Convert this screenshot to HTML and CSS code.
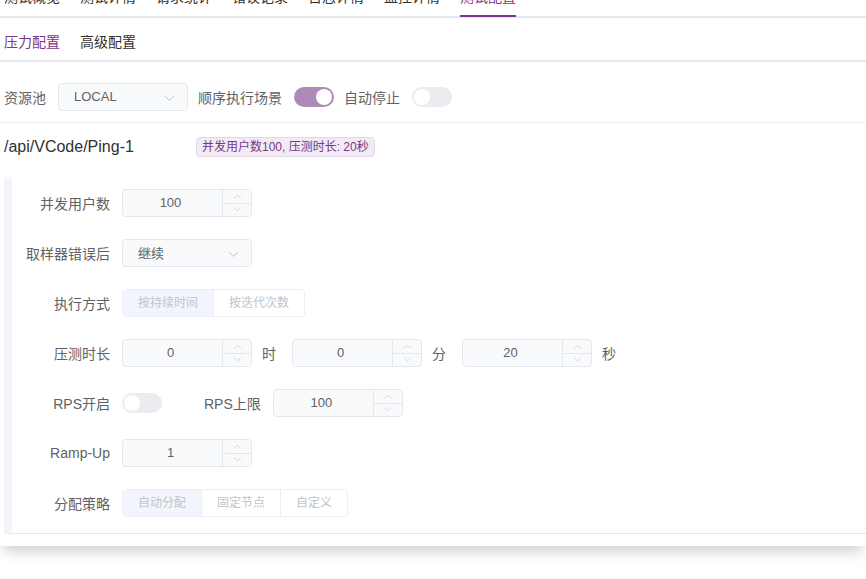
FILE: index.html
```html
<!DOCTYPE html>
<html lang="zh-CN">
<head>
    <meta charset="UTF-8">
    <meta name="viewport" content="width=device-width, initial-scale=1.0">
    <title>测试配置</title>
    <link rel="stylesheet" href="styles.css">
</head>
<body>
    <div class="card">
        <nav class="tabs">
            <a>测试概览</a>
            <a>测试详情</a>
            <a>请求统计</a>
            <a>错误记录</a>
            <a>日志详情</a>
            <a>监控详情</a>
            <a class="active">测试配置</a>
        </nav>

        <nav class="sub-tabs">
            <a class="active">压力配置</a>
            <a>高级配置</a>
        </nav>

        <div class="pool-row">
            <span>资源池</span>
            <div class="select pool-select">
                <span>LOCAL</span>
                <svg class="chev" width="11" height="7" viewBox="0 0 11 7"><path d="M1 1l4.5 4.5L10 1" fill="none" stroke="#c0c4cc" stroke-width="1"/></svg>
            </div>
            <span>顺序执行场景</span>
            <span class="switch on"></span>
            <span>自动停止</span>
            <span class="switch"></span>
        </div>

        <div class="api-row">
            <span class="api-name">/api/VCode/Ping-1</span>
            <span class="tag">并发用户数100, 压测时长: 20秒</span>
        </div>

        <section class="form">
            <div class="form-row">
                <label>并发用户数</label>
                <div class="num">
                    <span class="num-val">100</span>
                    <span class="num-ctrl">
                        <span><svg width="9" height="5" viewBox="0 0 9 5"><path d="M1 4.5L4.5 1L8 4.5" fill="none" stroke="#d4d7de"/></svg></span>
                        <span><svg width="9" height="5" viewBox="0 0 9 5"><path d="M1 .5L4.5 4L8 .5" fill="none" stroke="#d4d7de"/></svg></span>
                    </span>
                </div>
            </div>

            <div class="form-row">
                <label>取样器错误后</label>
                <div class="select">
                    <span>继续</span>
                    <svg class="chev" width="11" height="7" viewBox="0 0 11 7"><path d="M1 1l4.5 4.5L10 1" fill="none" stroke="#c0c4cc" stroke-width="1"/></svg>
                </div>
            </div>

            <div class="form-row">
                <label>执行方式</label>
                <div class="btn-group">
                    <span class="checked">按持续时间</span>
                    <span>按迭代次数</span>
                </div>
            </div>

            <div class="form-row">
                <label>压测时长</label>
                <div class="num">
                    <span class="num-val">0</span>
                    <span class="num-ctrl">
                        <span><svg width="9" height="5" viewBox="0 0 9 5"><path d="M1 4.5L4.5 1L8 4.5" fill="none" stroke="#d4d7de"/></svg></span>
                        <span><svg width="9" height="5" viewBox="0 0 9 5"><path d="M1 .5L4.5 4L8 .5" fill="none" stroke="#d4d7de"/></svg></span>
                    </span>
                </div>
                <span class="unit">时</span>
                <div class="num">
                    <span class="num-val">0</span>
                    <span class="num-ctrl">
                        <span><svg width="9" height="5" viewBox="0 0 9 5"><path d="M1 4.5L4.5 1L8 4.5" fill="none" stroke="#d4d7de"/></svg></span>
                        <span><svg width="9" height="5" viewBox="0 0 9 5"><path d="M1 .5L4.5 4L8 .5" fill="none" stroke="#d4d7de"/></svg></span>
                    </span>
                </div>
                <span class="unit">分</span>
                <div class="num">
                    <span class="num-val">20</span>
                    <span class="num-ctrl">
                        <span><svg width="9" height="5" viewBox="0 0 9 5"><path d="M1 4.5L4.5 1L8 4.5" fill="none" stroke="#d4d7de"/></svg></span>
                        <span><svg width="9" height="5" viewBox="0 0 9 5"><path d="M1 .5L4.5 4L8 .5" fill="none" stroke="#d4d7de"/></svg></span>
                    </span>
                </div>
                <span class="unit">秒</span>
            </div>

            <div class="form-row">
                <label>RPS开启</label>
                <span class="switch"></span>
                <span class="inline-label">RPS上限</span>
                <div class="num">
                    <span class="num-val">100</span>
                    <span class="num-ctrl">
                        <span><svg width="9" height="5" viewBox="0 0 9 5"><path d="M1 4.5L4.5 1L8 4.5" fill="none" stroke="#d4d7de"/></svg></span>
                        <span><svg width="9" height="5" viewBox="0 0 9 5"><path d="M1 .5L4.5 4L8 .5" fill="none" stroke="#d4d7de"/></svg></span>
                    </span>
                </div>
            </div>

            <div class="form-row">
                <label>Ramp-Up</label>
                <div class="num">
                    <span class="num-val">1</span>
                    <span class="num-ctrl">
                        <span><svg width="9" height="5" viewBox="0 0 9 5"><path d="M1 4.5L4.5 1L8 4.5" fill="none" stroke="#d4d7de"/></svg></span>
                        <span><svg width="9" height="5" viewBox="0 0 9 5"><path d="M1 .5L4.5 4L8 .5" fill="none" stroke="#d4d7de"/></svg></span>
                    </span>
                </div>
            </div>

            <div class="form-row">
                <label>分配策略</label>
                <div class="btn-group">
                    <span class="checked">自动分配</span>
                    <span>固定节点</span>
                    <span>自定义</span>
                </div>
            </div>
        </section>
    </div>
</body>
</html>
```

FILE: styles.css
```css
/* Base */
* {
    margin: 0;
    padding: 0;
    box-sizing: border-box;
}

:root {
    --primary: #783887;
    --text: #303133;
    --label: #606266;
    --border: #e4e7ed;
    --muted: #c0c4cc;
    --input-bg: #f9fafc;
}

html,
body {
    height: 100%;
}

body {
    font-family: "Liberation Sans", "Noto Sans CJK SC", sans-serif;
    font-size: 14px;
    color: var(--text);
    background: #fff;
    overflow: hidden;
}

/* Card (page is scrolled a little, top tabs cut off) */
.card {
    position: relative;
    margin-top: -22px;
    padding-bottom: 12px;
    background: #fff;
    box-shadow: 0 10px 12px -4px rgba(0, 0, 0, 0.18);
}

/* Tabs */
.tabs {
    display: flex;
    gap: 20px;
    padding-left: 4px;
    height: 40px;
    border-bottom: 2px solid var(--border);
}

.tabs a {
    position: relative;
    line-height: 38px;
    color: var(--text);
}

.tabs a.active {
    color: var(--primary);
}

.tabs a.active::after {
    content: "";
    position: absolute;
    left: 0;
    right: 0;
    bottom: -1px;
    height: 2px;
    background: var(--primary);
}

.sub-tabs {
    display: flex;
    gap: 20px;
    padding: 6px 0 0 4px;
    height: 44px;
    border-bottom: 2px solid var(--border);
}

.sub-tabs a {
    line-height: 36px;
    color: var(--text);
}

.sub-tabs a.active {
    color: var(--primary);
}

/* Resource pool row */
.pool-row {
    display: flex;
    align-items: center;
    margin-top: 21px;
    padding: 0 0 11px 4px;
    border-bottom: 1px solid #ebeef5;
    color: var(--label);
}

.pool-row .pool-select {
    margin: 0 10px 0 12px;
}

.pool-row .switch {
    margin: 0 10px 0 12px;
}

/* Select */
.select {
    position: relative;
    display: flex;
    align-items: center;
    width: 130px;
    height: 28px;
    padding: 0 0 1px 15px;
    border: 1px solid var(--border);
    border-radius: 4px;
    background: var(--input-bg);
    color: var(--label);
    font-size: 13px;
}

.select .chev {
    position: absolute;
    right: 12px;
    top: 11px;
}

/* Switch */
.switch {
    position: relative;
    display: inline-block;
    width: 40px;
    height: 20px;
    border-radius: 10px;
    background: #eaecf0;
    flex-shrink: 0;
}

.switch::after {
    content: "";
    position: absolute;
    top: 2px;
    left: 2px;
    width: 16px;
    height: 16px;
    border-radius: 50%;
    background: #fff;
}

.switch.on {
    background: #ae88b7;
}

.switch.on::after {
    left: 22px;
}

/* API row */
.api-row {
    display: flex;
    align-items: center;
    padding: 14px 0 20px 4px;
}

.api-name {
    width: 192px;
    font-size: 16px;
    color: var(--text);
}

.tag {
    height: 20px;
    line-height: 18px;
    padding: 0 5px;
    font-size: 12px;
    color: var(--primary);
    background: #f2ebf4;
    border: 1px solid #e4d7e8;
    border-radius: 4px;
}

/* Form */
.form {
    margin-left: 4px;
    padding: 12px 0 16px;
    border-left: 8px solid #f4f5fa;
    border-bottom: 1px solid #e6e8ef;
}

.form-row {
    display: flex;
    align-items: center;
    height: 28px;
    margin-bottom: 22px;
}

.form-row:last-child {
    margin-bottom: 0;
}

.form-row label {
    width: 110px;
    padding-right: 12px;
    text-align: right;
    color: var(--label);
}

.unit {
    margin: 0 16px 0 10px;
    color: var(--label);
}

.inline-label {
    margin: 0 12px 0 42px;
    color: var(--label);
}

/* Number input */
.num {
    display: flex;
    width: 130px;
    height: 28px;
    border: 1px solid var(--border);
    border-radius: 4px;
    background: var(--input-bg);
}

.num-val {
    flex: 1;
    padding-right: 4px;
    text-align: center;
    line-height: 26px;
    font-size: 13px;
    color: var(--label);
}

.num-ctrl {
    display: flex;
    flex-direction: column;
    width: 29px;
    border-left: 1px solid var(--border);
}

.num-ctrl span {
    flex: 1;
    display: flex;
    align-items: center;
    justify-content: center;
}

.num-ctrl span:first-child {
    border-bottom: 1px solid var(--border);
}

/* Button group */
.btn-group {
    display: flex;
    height: 28px;
    border: 1px solid #ebeef5;
    border-radius: 4px;
    overflow: hidden;
}

.btn-group span {
    padding: 0 15px;
    line-height: 26px;
    font-size: 12px;
    color: var(--muted);
    background: #fff;
    border-left: 1px solid #ebeef5;
}

.btn-group span:first-child {
    border-left: none;
}

.btn-group span.checked {
    background: #f2f6fc;
}
```
